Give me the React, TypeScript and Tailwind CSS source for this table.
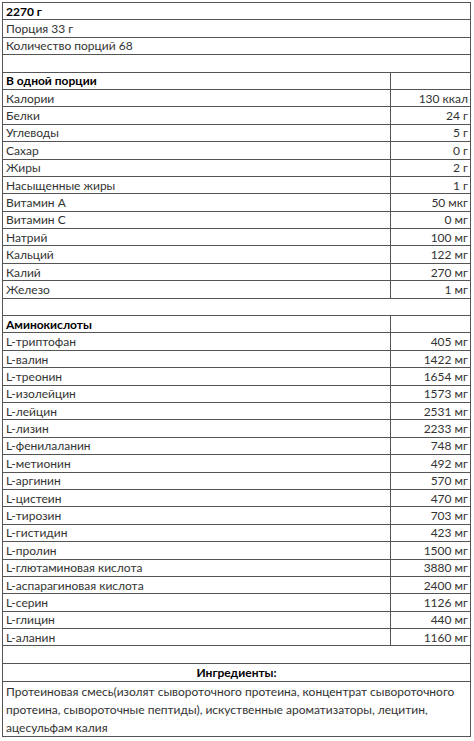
import React from 'react';

const NUTRIENTS: [string, string][] = [
  ['Калории', '130 ккал'],
  ['Белки', '24 г'],
  ['Углеводы', '5 г'],
  ['Сахар', '0 г'],
  ['Жиры', '2 г'],
  ['Насыщенные жиры', '1 г'],
  ['Витамин А', '50 мкг'],
  ['Витамин С', '0 мг'],
  ['Натрий', '100 мг'],
  ['Кальций', '122 мг'],
  ['Калий', '270 мг'],
  ['Железо', '1 мг'],
];

const AMINO: [string, string][] = [
  ['L-триптофан', '405 мг'],
  ['L-валин', '1422 мг'],
  ['L-треонин', '1654 мг'],
  ['L-изолейцин', '1573 мг'],
  ['L-лейцин', '2531 мг'],
  ['L-лизин', '2233 мг'],
  ['L-фенилаланин', '748 мг'],
  ['L-метионин', '492 мг'],
  ['L-аргинин', '570 мг'],
  ['L-цистеин', '470 мг'],
  ['L-тирозин', '703 мг'],
  ['L-гистидин', '423 мг'],
  ['L-пролин', '1500 мг'],
  ['L-глютаминовая кислота', '3880 мг'],
  ['L-аспарагиновая кислота', '2400 мг'],
  ['L-серин', '1126 мг'],
  ['L-глицин', '440 мг'],
  ['L-аланин', '1160 мг'],
];

const Full: React.FC<{ children?: React.ReactNode; bold?: boolean }> = ({ children, bold }) => (
  <div className={`h-[17.4px] border-b border-[#555] px-[3px] pt-[1px] flex items-center leading-none ${bold ? 'font-bold text-black' : ''}`}>
    {children}
  </div>
);

const Pair: React.FC<{ name: string; value?: string; bold?: boolean }> = ({ name, value, bold }) => (
  <div className="h-[17.4px] border-b border-[#555] flex leading-none">
    <div className={`flex-1 px-[3px] pt-[1px] flex items-center border-r border-[#555] ${bold ? 'font-bold text-black' : ''}`}>{name}</div>
    <div className="w-[79px] px-[2px] pt-[1px] flex items-center justify-end">{value}</div>
  </div>
);

const App: React.FC = () => {
  return (
    <div className="w-[474px] h-[741px] bg-white pt-[2px] pl-[2px] font-['Lato','Noto_Sans',sans-serif]">
      <div className="w-[469px] border-t border-l border-r border-[#555] text-[12px] text-[#333]">
        <Full bold>2270 г</Full>
        <Full>Порция 33 г</Full>
        <Full>Количество порций 68</Full>
        <Full />
        <Pair name="В одной порции" bold />
        {NUTRIENTS.map(([n, v]) => (
          <Pair key={n} name={n} value={v} />
        ))}
        <Full />
        <Pair name="Аминокислоты" bold />
        {AMINO.map(([n, v]) => (
          <Pair key={n} name={n} value={v} />
        ))}
        <Full />
        <div className="h-[18px] border-b border-[#555] pt-[1px] flex items-center justify-center font-bold text-black leading-none">
          Ингредиенты:
        </div>
        <div className="h-[55px] border-b border-[#555] px-[3px] pt-[1px] leading-[18px]">
          Протеиновая смесь(изолят сывороточного протеина, концентрат сывороточного протеина, сывороточные пептиды), искуственные ароматизаторы, лецитин, ацесульфам калия
        </div>
      </div>
    </div>
  );
};

export default App;
